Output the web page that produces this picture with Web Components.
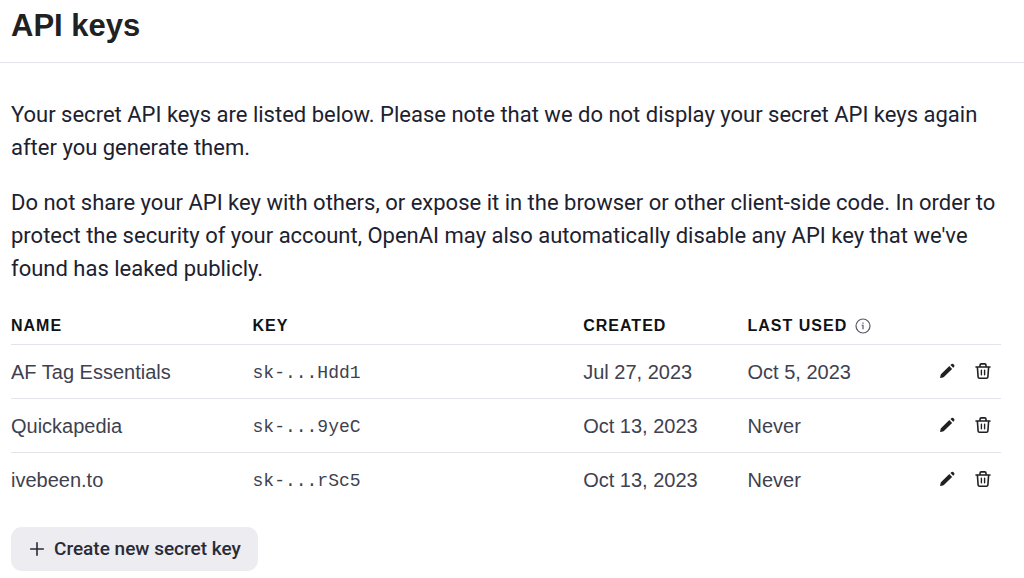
<!DOCTYPE html>
<html lang="en">
<head>
<meta charset="utf-8">
<meta name="viewport" content="width=device-width, initial-scale=1">
<title>API keys</title>
<style>
  body {
    margin: 0;
    background: #fff;
    color: #202123;
    font-family: Roboto, "Liberation Sans", Arial, sans-serif;
  }
</style>
</head>
<body>
<api-keys-page></api-keys-page>

<template id="page-template">
  <style>
    :host { display: block; }
    main { padding: 35px 23px 6px 11px; }
    p { margin: 0 0 22px; font-size: 22px; line-height: 33px; color: #202130; }
    key-table { margin-bottom: 21px; }
  </style>
  <page-header>API keys</page-header>
  <main>
    <p>Your secret API keys are listed below. Please note that we do not display your secret API keys again after you generate them.</p>
    <p>Do not share your API key with others, or expose it in the browser or other client-side code. In order to protect the security of your account, OpenAI may also automatically disable any API key that we've found has leaked publicly.</p>
    <key-table></key-table>
    <create-button>Create new secret key</create-button>
  </main>
</template>

<template id="header-template">
  <style>
    :host { display: block; border-bottom: 1px solid #e3e3eb; }
    h1 { margin: 0; padding: 8px 11px 18px; font-family: "Liberation Sans", Arial, sans-serif; font-size: 31px; line-height: 36px; font-weight: 700; }
  </style>
  <header><h1><slot></slot></h1></header>
</template>

<template id="table-template">
  <style>
    :host { display: block; font-family: "Liberation Sans", Arial, sans-serif; }
    table { width: 100%; table-layout: fixed; border-collapse: separate; border-spacing: 0; }
    .name { width: 24.4%; }
    .key { width: 33.4%; }
    .created { width: 16.6%; }
    .used { width: 15.6%; }
    th, td { padding: 0; text-align: left; vertical-align: middle; white-space: nowrap; }
    th { height: 37px; font-size: 16px; line-height: 24px; letter-spacing: 1px; color: #111214; }
    td { height: 53px; border-top: 1px solid #e3e3eb; color: #40414f; font-size: 20px; line-height: 30px; }
    td code { font-family: "Liberation Mono", "Courier New", monospace; font-size: 18px; }
    .label { display: flex; align-items: center; gap: 8px; }
    .actions { display: flex; justify-content: flex-end; gap: 12px; padding: 0 6px 2px 0; }
  </style>
  <table>
    <colgroup><col class="name"><col class="key"><col class="created"><col class="used"><col></colgroup>
    <thead>
      <tr>
        <th scope="col">NAME</th>
        <th scope="col">KEY</th>
        <th scope="col">CREATED</th>
        <th scope="col"><span class="label">LAST USED <ui-icon name="info"></ui-icon></span></th>
        <th scope="col" aria-label="Actions"></th>
      </tr>
    </thead>
    <tbody></tbody>
  </table>
</template>

<template id="icon-button-template">
  <style>
    :host { display: block; }
    button { display: flex; align-items: center; justify-content: center; width: 24px; height: 24px; margin: 0; padding: 0; border: 0; background: none; color: #202123; cursor: pointer; }
  </style>
  <button type="button"><ui-icon></ui-icon></button>
</template>

<template id="create-button-template">
  <style>
    :host { display: block; }
    button { display: inline-flex; align-items: center; gap: 9px; margin: 0; padding: 10px 17px 10px 18px; border: 0; border-radius: 11px; background: #ececf1; color: #2a2b36; font: 500 19px/24px Roboto, "Liberation Sans", Arial, sans-serif; cursor: pointer; }
  </style>
  <button type="button"><ui-icon name="plus"></ui-icon><slot></slot></button>
</template>

<script>
  const clone = id => document.getElementById(id).content.cloneNode(true);

  const ICONS = {
    info: '<circle cx="8" cy="8" r="7" fill="none" stroke="#565869" stroke-width="1.2"/><path fill="#565869" d="M6.6 6.7h2v4.6H7.4V7.7h-.8zM7.4 4.5h1.2v1.2H7.4z"/>',
    pencil: '<path fill="currentColor" d="M10.3 3.1l2.8 2.8-8.2 8.1c-.3.3-.6.4-1 .5l-2.3.5c-.3.1-.6-.2-.5-.5l.5-2.3c.1-.4.3-.8.6-1.1zM11.4 2l.6-.6a1.95 1.95 0 0 1 2.8 2.8l-.6.6z"/>',
    trash: '<g fill="none" stroke="currentColor" stroke-width="1.6" stroke-linecap="round" stroke-linejoin="round"><path d="M1 4h14M5 3.8V2.2c0-.8.5-1.3 1.3-1.3h3.4c.8 0 1.3.5 1.3 1.3v1.6M2.4 4.3l.7 9.5c.1.9.6 1.4 1.4 1.4h7c.8 0 1.3-.5 1.4-1.4l.7-9.5"/><path stroke-width="1.4" d="M6.4 7.2v4.6M9.6 7.2v4.6"/></g>',
    plus: '<path fill="none" stroke="currentColor" stroke-width="1.6" stroke-linecap="round" d="M8 1.7v12.6M1.7 8h12.6"/>'
  };

  class UiIcon extends HTMLElement {
    connectedCallback() {
      if (this.shadowRoot) return;
      this.attachShadow({ mode: "open" }).innerHTML =
        `<style>:host{display:block;flex:none;width:16px;height:16px}svg{display:block;width:100%;height:100%}</style>
         <svg viewBox="0 0 16 16" aria-hidden="true">${ICONS[this.getAttribute("name")] || ""}</svg>`;
    }
  }

  class IconButton extends HTMLElement {
    connectedCallback() {
      if (this.shadowRoot) return;
      const content = clone("icon-button-template");
      content.querySelector("ui-icon").setAttribute("name", this.getAttribute("icon"));
      content.querySelector("button").setAttribute("aria-label", this.getAttribute("label"));
      this.attachShadow({ mode: "open" }).append(content);
    }
  }

  class PageHeader extends HTMLElement {
    constructor() {
      super();
      this.attachShadow({ mode: "open" }).append(clone("header-template"));
    }
  }

  class CreateButton extends HTMLElement {
    constructor() {
      super();
      this.attachShadow({ mode: "open" }).append(clone("create-button-template"));
    }
  }

  const KEYS = [
    ["AF Tag Essentials", "sk-...Hdd1", "Jul 27, 2023", "Oct 5, 2023"],
    ["Quickapedia", "sk-...9yeC", "Oct 13, 2023", "Never"],
    ["ivebeen.to", "sk-...rSc5", "Oct 13, 2023", "Never"]
  ];

  class KeyTable extends HTMLElement {
    connectedCallback() {
      if (this.shadowRoot) return;
      const content = clone("table-template");
      content.querySelector("tbody").innerHTML = KEYS.map(([name, key, created, used]) => `
        <tr>
          <td>${name}</td>
          <td><code>${key}</code></td>
          <td>${created}</td>
          <td>${used}</td>
          <td><div class="actions">
            <icon-button icon="pencil" label="Edit ${name}"></icon-button>
            <icon-button icon="trash" label="Delete ${name}"></icon-button>
          </div></td>
        </tr>`).join("");
      this.attachShadow({ mode: "open" }).append(content);
    }
  }

  class ApiKeysPage extends HTMLElement {
    connectedCallback() {
      if (this.shadowRoot) return;
      this.attachShadow({ mode: "open" }).append(clone("page-template"));
    }
  }

  customElements.define("ui-icon", UiIcon);
  customElements.define("icon-button", IconButton);
  customElements.define("page-header", PageHeader);
  customElements.define("create-button", CreateButton);
  customElements.define("key-table", KeyTable);
  customElements.define("api-keys-page", ApiKeysPage);
</script>
</body>
</html>
